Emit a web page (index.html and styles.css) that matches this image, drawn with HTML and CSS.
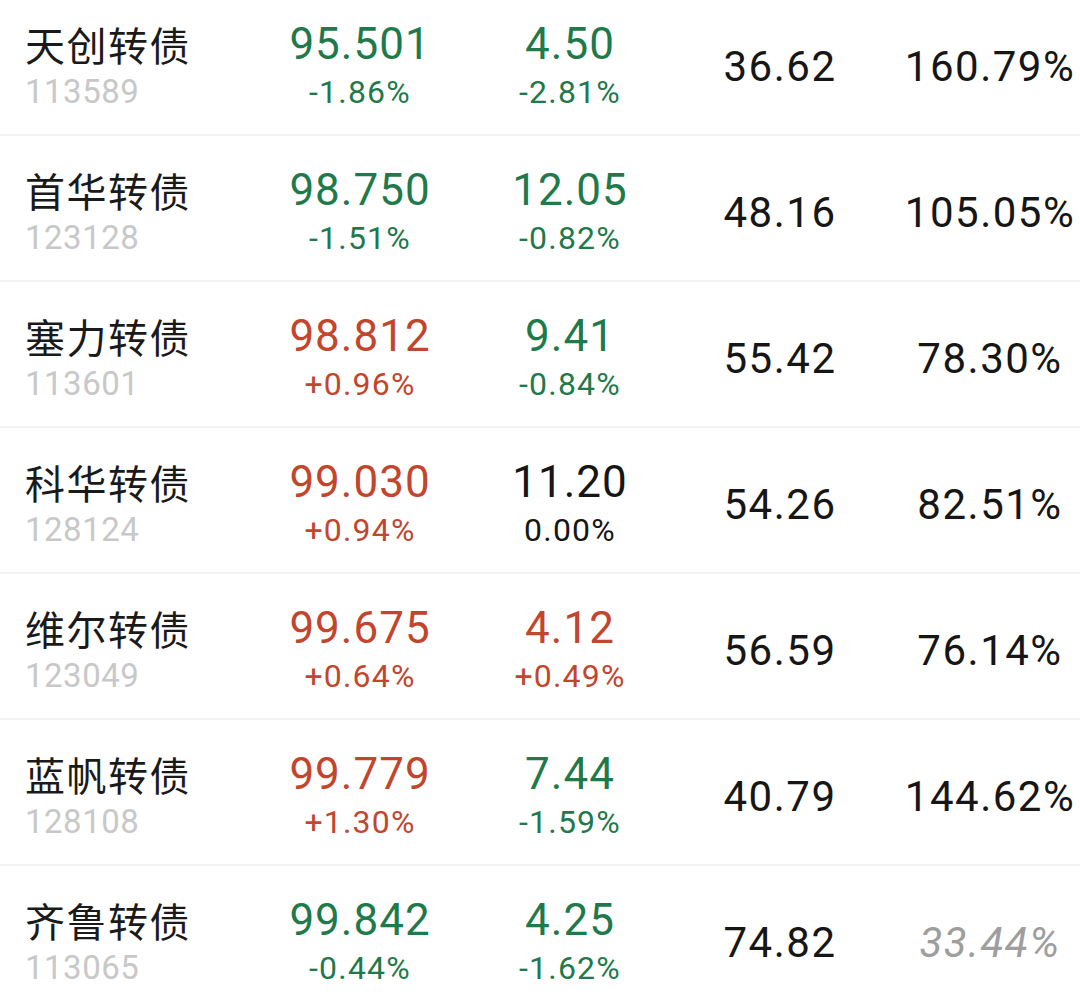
FILE: index.html
```html
<!DOCTYPE html>
<html lang="zh">
<head>
<meta charset="utf-8">
<title>可转债列表</title>
<link rel="stylesheet" href="styles.css">
</head>
<body>
<div class="list">
  <div class="row">
    <div class="name-cell"><div class="name">天创转债</div><div class="code">113589</div></div>
    <div class="dual"><div class="main down">95.501</div><div class="sub down">-1.86%</div></div>
    <div class="dual"><div class="main down">4.50</div><div class="sub down">-2.81%</div></div>
    <div class="single">36.62</div>
    <div class="single last">160.79%</div>
  </div>
  <div class="row">
    <div class="name-cell"><div class="name">首华转债</div><div class="code">123128</div></div>
    <div class="dual"><div class="main down">98.750</div><div class="sub down">-1.51%</div></div>
    <div class="dual"><div class="main down">12.05</div><div class="sub down">-0.82%</div></div>
    <div class="single">48.16</div>
    <div class="single last">105.05%</div>
  </div>
  <div class="row">
    <div class="name-cell"><div class="name">塞力转债</div><div class="code">113601</div></div>
    <div class="dual"><div class="main up">98.812</div><div class="sub up">+0.96%</div></div>
    <div class="dual"><div class="main down">9.41</div><div class="sub down">-0.84%</div></div>
    <div class="single">55.42</div>
    <div class="single last">78.30%</div>
  </div>
  <div class="row">
    <div class="name-cell"><div class="name">科华转债</div><div class="code">128124</div></div>
    <div class="dual"><div class="main up">99.030</div><div class="sub up">+0.94%</div></div>
    <div class="dual"><div class="main flat">11.20</div><div class="sub flat">0.00%</div></div>
    <div class="single">54.26</div>
    <div class="single last">82.51%</div>
  </div>
  <div class="row">
    <div class="name-cell"><div class="name">维尔转债</div><div class="code">123049</div></div>
    <div class="dual"><div class="main up">99.675</div><div class="sub up">+0.64%</div></div>
    <div class="dual"><div class="main up">4.12</div><div class="sub up">+0.49%</div></div>
    <div class="single">56.59</div>
    <div class="single last">76.14%</div>
  </div>
  <div class="row">
    <div class="name-cell"><div class="name">蓝帆转债</div><div class="code">128108</div></div>
    <div class="dual"><div class="main up">99.779</div><div class="sub up">+1.30%</div></div>
    <div class="dual"><div class="main down">7.44</div><div class="sub down">-1.59%</div></div>
    <div class="single">40.79</div>
    <div class="single last">144.62%</div>
  </div>
  <div class="row">
    <div class="name-cell"><div class="name">齐鲁转债</div><div class="code">113065</div></div>
    <div class="dual"><div class="main down">99.842</div><div class="sub down">-0.44%</div></div>
    <div class="dual"><div class="main down">4.25</div><div class="sub down">-1.62%</div></div>
    <div class="single">74.82</div>
    <div class="single last muted">33.44%</div>
  </div>
</div>
</body>
</html>
```

FILE: styles.css
```css
html, body {
  margin: 0;
  padding: 0;
  background: #ffffff;
  overflow: hidden;
}

body {
  width: 1080px;
  height: 1008px;
  font-family: Roboto, "Noto Sans", "Noto Sans CJK SC", sans-serif;
  color: #161616;
}

.list {
  margin-top: -10px;
}

.row {
  display: grid;
  grid-template-columns: 255px 210px 210px 210px 195px;
  height: 144px;
  border-bottom: 2px solid #f2f2f2;
}

.name-cell {
  padding-top: 29px;
  padding-left: 25px;
}

.name {
  font-family: "Noto Sans CJK SC", sans-serif;
  font-size: 40px;
  line-height: 50px;
  color: #1a1a1a;
  letter-spacing: 1.5px;
}

.code {
  font-size: 33px;
  line-height: 46px;
  color: #c8c8c8;
  letter-spacing: 0.5px;
}

.dual {
  padding-top: 29px;
  text-align: center;
}

.main {
  font-size: 44px;
  line-height: 50px;
  letter-spacing: 1px;
}

.sub {
  font-size: 32px;
  line-height: 46px;
  letter-spacing: 1.2px;
}

.single {
  align-self: center;
  padding-top: 8px;
  text-align: center;
  font-size: 42px;
  letter-spacing: 1.5px;
  color: #161616;
}

.single.last {
  padding-left: 15px;
}

.up { color: #c2462d; }
.down { color: #1f7a4b; }
.flat { color: #161616; }

.muted {
  color: #9e9e9e;
  font-style: italic;
}
```
